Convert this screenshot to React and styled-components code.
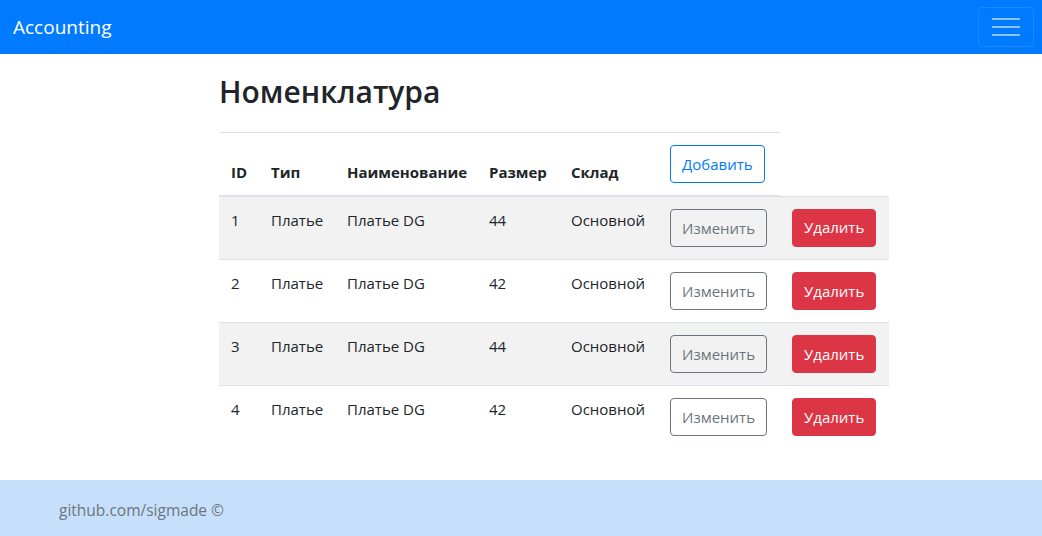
import React from "react";
import styled, { createGlobalStyle } from "styled-components";

const GlobalStyle = createGlobalStyle`
  * { box-sizing: border-box; }
  body {
    margin: 0;
    font-family: "Open Sans", "Noto Sans", sans-serif;
    font-size: 16px;
    line-height: 1.5;
    color: #212529;
    background: #fff;
  }
`;

const Navbar = styled.nav`
  height: 54px;
  background: #007bff;
  display: flex;
  align-items: center;
  justify-content: space-between;
  padding: 0 8px 0 13px;
`;

const Brand = styled.a`
  color: #fff;
  font-size: 19px;
  text-decoration: none;
  line-height: 1.5;
`;

const Toggler = styled.button`
  width: 56px;
  height: 40px;
  border: 1px solid rgba(255, 255, 255, 0.1);
  border-radius: 4px;
  background: transparent;
  display: flex;
  flex-direction: column;
  align-items: center;
  justify-content: center;
  gap: 6px;
  padding: 0;

  span {
    display: block;
    width: 28px;
    height: 2px;
    background: rgba(255, 255, 255, 0.55);
  }
`;

const Main = styled.main`
  padding: 20px 0 32px 219px;
`;

const Title = styled.h2`
  margin: 0 0 22px;
  font-size: 30px;
  font-weight: 600;
  line-height: 1.2;
`;

const Table = styled.table`
  width: 670px;
  table-layout: fixed;
  border-collapse: collapse;
  font-size: 15px;
`;

const Head = styled.th`
  text-align: left;
  vertical-align: bottom;
  padding: 12px;
  font-weight: 700;
  border-top: 1px solid #dee2e6;
  border-bottom: 2px solid #dee2e6;
  white-space: nowrap;
`;

const Row = styled.tr`
  background: ${(p) => (p.$striped ? "#f2f2f2" : "transparent")};
`;

const Cell = styled.td`
  padding: 12px;
  vertical-align: top;
  border-top: 1px solid #dee2e6;
  white-space: nowrap;
`;

const Button = styled.button`
  font-family: inherit;
  font-size: 15px;
  line-height: 1.5;
  height: 38px;
  padding: 0 11px;
  border-radius: 4px;
  border: 1px solid ${(p) => p.$border};
  background: ${(p) => p.$bg || "transparent"};
  color: ${(p) => p.$color};
  white-space: nowrap;
`;

const Footer = styled.footer`
  background: #c6e0fc;
  height: 56px;
  padding: 19px 0 0 59px;
  color: #6c757d;
  font-size: 15.5px;
`;

const items = [
  { id: 1, type: "Платье", name: "Платье DG", size: 44, store: "Основной" },
  { id: 2, type: "Платье", name: "Платье DG", size: 42, store: "Основной" },
  { id: 3, type: "Платье", name: "Платье DG", size: 44, store: "Основной" },
  { id: 4, type: "Платье", name: "Платье DG", size: 42, store: "Основной" },
];

const widths = [40, 76, 142, 82, 99, 122, 109];

export default function App() {
  return (
    <>
      <GlobalStyle />
      <Navbar>
        <Brand href="#">Accounting</Brand>
        <Toggler aria-label="menu">
          <span />
          <span />
          <span />
        </Toggler>
      </Navbar>
      <Main>
        <Title>Номенклатура</Title>
        <Table>
          <colgroup>
            {widths.map((w, i) => (
              <col key={i} style={{ width: w }} />
            ))}
          </colgroup>
          <thead>
            <tr>
              <Head>ID</Head>
              <Head>Тип</Head>
              <Head>Наименование</Head>
              <Head>Размер</Head>
              <Head>Склад</Head>
              <Head>
                <Button $border="#007bff" $color="#007bff">
                  Добавить
                </Button>
              </Head>
            </tr>
          </thead>
          <tbody>
            {items.map((it, i) => (
              <Row key={it.id} $striped={i % 2 === 0}>
                <Cell>{it.id}</Cell>
                <Cell>{it.type}</Cell>
                <Cell>{it.name}</Cell>
                <Cell>{it.size}</Cell>
                <Cell>{it.store}</Cell>
                <Cell>
                  <Button $border="#6c757d" $color="#6c757d">
                    Изменить
                  </Button>
                </Cell>
                <Cell>
                  <Button $border="#dc3545" $bg="#dc3545" $color="#fff">
                    Удалить
                  </Button>
                </Cell>
              </Row>
            ))}
          </tbody>
        </Table>
      </Main>
      <Footer>github.com/sigmade ©</Footer>
    </>
  );
}
